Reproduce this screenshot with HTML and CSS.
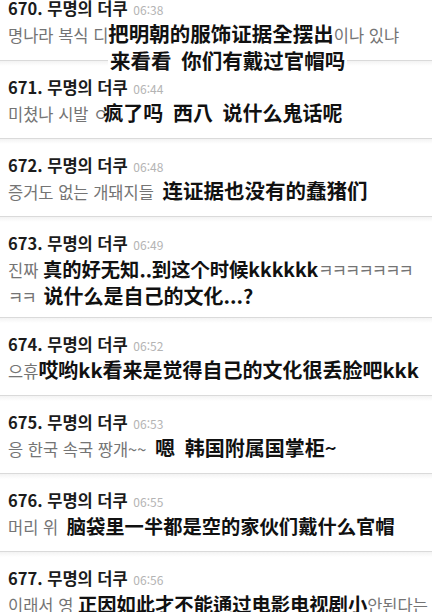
FILE: index.html
```html
<!DOCTYPE html>
<html lang="ko">

<head>
    <meta charset="UTF-8">
    <meta name="viewport" content="width=device-width, initial-scale=1.0">
    <title>무명의 더쿠</title>
    <link rel="stylesheet" href="styles.css">
</head>

<body>
    <div id="list">
        <div class="item first">
            <div class="head">670. 무명의 더쿠 <span class="time">06:38</span></div>
            <div class="body">명나라 복식 디<b class="zh zh-l">把明朝的服饰证据全摆出</b>이나 있냐</div>
            <!-- 第二行字幕压在分隔线上 -->
            <div class="caption zh zh-l">来看看 你们有戴过官帽吗</div>
        </div>
        <div class="item">
            <div class="head">671. 무명의 더쿠 <span class="time">06:44</span></div>
            <div class="body">미쳤나 시발 ㅇ<b class="zh pull">疯了吗 西八 说什么鬼话呢</b></div>
        </div>
        <div class="item">
            <div class="head">672. 무명의 더쿠 <span class="time">06:48</span></div>
            <div class="body">증거도 없는 개돼지들 <b class="zh zh-l gap">连证据也没有的蠢猪们</b></div>
        </div>
        <div class="item two">
            <div class="head">673. 무명의 더쿠 <span class="time">06:49</span></div>
            <div class="body">진짜 <b class="zh zh-s">真的好无知..到这个时候kkkkkk</b><span class="kk">ㅋㅋㅋㅋㅋㅋㅋ</span><br>
                <span class="kk">ㅋㅋ</span> <b class="zh gap">说什么是自己的文化...?</b></div>
        </div>
        <div class="item">
            <div class="head">674. 무명의 더쿠 <span class="time">06:52</span></div>
            <div class="body">으휴<b class="zh">哎哟kk看来是觉得自己的文化很丢脸吧kkk</b></div>
        </div>
        <div class="item">
            <div class="head">675. 무명의 더쿠 <span class="time">06:53</span></div>
            <div class="body">응 한국 속국 짱개~~ <b class="zh gap">嗯 韩国附属国掌柜~</b></div>
        </div>
        <div class="item">
            <div class="head">676. 무명의 더쿠 <span class="time">06:55</span></div>
            <div class="body">머리 위 <b class="zh zh-s gap">脑袋里一半都是空的家伙们戴什么官帽</b></div>
        </div>
        <div class="item">
            <div class="head">677. 무명의 더쿠 <span class="time">06:56</span></div>
            <div class="body">이래서 영 <b class="zh zh-s">正因如此才不能通过电影电视剧小</b>안된다는</div>
        </div>
    </div>
</body>

</html>
```

FILE: styles.css
```css
body {
    margin: 0;
    background-color: #ffffff;
    font-family: "Noto Sans CJK KR", "Noto Sans CJK SC", sans-serif;
    overflow: hidden;
}

#list {
    width: 432px;
    overflow: hidden;
}

.item {
    position: relative;
    height: 52px;
    border-top: 1px solid #dadada;
    padding: 15px 0 10px 8px;
    background: linear-gradient(#f3f3f3, #ffffff 5px);
}

.item.first {
    border-top: none;
    margin-top: -19px;
    padding-top: 16px;
    padding-bottom: 11px;
    background: none;
}

.item.two {
    height: 76px;
    padding-bottom: 9px;
}

.head {
    height: 22px;
    line-height: 22px;
    font-size: 16.5px;
    font-weight: 700;
    color: #1c1c1c;
    white-space: nowrap;
}

.time {
    font-size: 12px;
    font-weight: 400;
    line-height: 1;
    color: #b4b4b4;
    margin-left: 1px;
}

.body {
    margin-top: 3px;
    line-height: 27px;
    font-size: 16.5px;
    color: #747474;
    white-space: nowrap;
}

.zh {
    font-family: "Noto Sans CJK SC", sans-serif;
    font-weight: 700;
    font-size: 20px;
    line-height: 1;
    word-spacing: 4px;
    color: #111111;
}

.zh-l {
    font-size: 20.5px;
}

.zh-s {
    font-size: 19.3px;
}

.gap {
    margin-left: 4px;
}

.pull {
    margin-left: -5px;
}

.kk {
    letter-spacing: -1.8px;
}

.caption {
    position: absolute;
    left: 108px;
    top: 66px;
    z-index: 2;
    padding: 0 2px;
    line-height: 27px;
    background-color: #ffffff;
    white-space: nowrap;
}
```
